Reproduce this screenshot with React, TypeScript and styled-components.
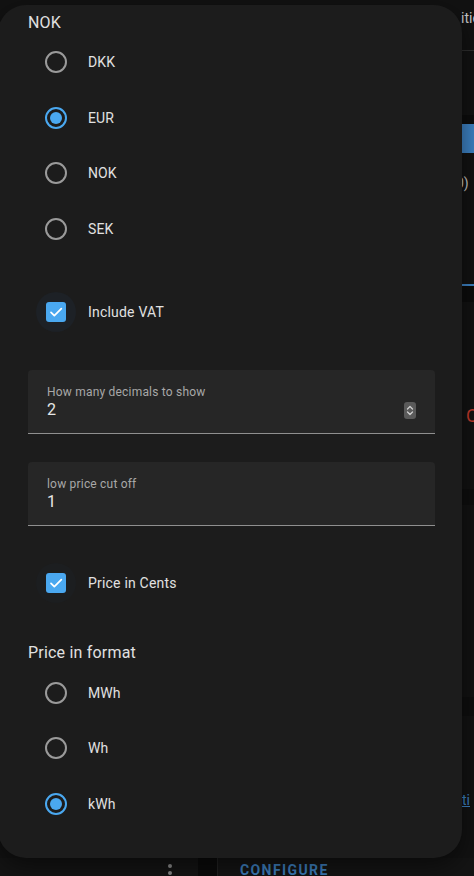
import React from "react"
import styled, { createGlobalStyle } from "styled-components"

const GlobalStyle = createGlobalStyle`
  html, body {
    margin: 0;
    padding: 0;
    background: #111111;
    font-family: Roboto, "Noto Sans", "Liberation Sans", sans-serif;
    overflow: hidden;
  }
`

const Page = styled.div`
  position: relative;
  width: 474px;
  height: 876px;
  display: flex;
  flex-direction: column;
  background: #121212;
  overflow: hidden;
`

const Behind = styled.div`
  flex: 1;
  display: flex;
  justify-content: flex-end;
`

const Strip = styled.div`
  width: 28px;
  display: flex;
  flex-direction: column;
  color: #c8c8c8;
  font-size: 14px;
  overflow: hidden;
`

const StripText = styled.div<{ $top: number; $left?: number; $color?: string; $underline?: boolean; $size?: number }>`
  margin-top: ${(p) => p.$top}px;
  padding-left: ${(p) => p.$left ?? 16}px;
  height: 20px;
  line-height: 20px;
  font-size: ${(p) => p.$size ?? 14}px;
  white-space: nowrap;
  color: ${(p) => p.$color ?? "#c8c8c8"};
  text-decoration: ${(p) => (p.$underline ? "underline" : "none")};
`

const StripBlock = styled.div<{ $top: number; $h: number; $color: string }>`
  margin-top: ${(p) => p.$top}px;
  height: ${(p) => p.$h}px;
  background: ${(p) => p.$color};
  flex-shrink: 0;
`

const Toolbar = styled.div`
  height: 18px;
  display: flex;
  align-items: center;
  background: #141414;
  overflow: hidden;
`

const Dots = styled.div`
  margin-left: 166px;
  width: 8px;
  display: flex;
  flex-direction: column;
  align-items: center;
  gap: 3px;
  padding-top: 4px;

  span {
    width: 4px;
    height: 4px;
    border-radius: 50%;
    background: #8a8a8a;
  }
`

const DarkBox = styled.div`
  margin-left: 24px;
  width: 19px;
  height: 18px;
  background: #0b0b0b;
  border-right: 1px solid #222;
`

const ConfigureLink = styled.div`
  margin-left: 22px;
  padding-top: 5px;
  font-size: 14px;
  font-weight: 700;
  letter-spacing: 1.4px;
  color: #3d7fbe;
`

const Dialog = styled.div`
  position: absolute;
  left: -2px;
  top: 5px;
  width: 464px;
  height: 853px;
  background: #1c1c1c;
  border-radius: 28px;
  box-shadow: 0 8px 24px rgba(0, 0, 0, 0.5);
  overflow: hidden;
  display: flex;
  flex-direction: column;
  padding-left: 30px;
  padding-right: 27px;
  box-sizing: border-box;
  color: #e1e1e1;
`

const SectionTitle = styled.div<{ $top: number }>`
  margin-top: ${(p) => p.$top}px;
  font-size: 16px;
  line-height: 24px;
  color: #e1e1e1;
  letter-spacing: 0.2px;
`

const OptionRow = styled.label`
  height: 55.5px;
  display: flex;
  align-items: center;
  font-size: 14px;
  color: #e1e1e1;
  letter-spacing: 0.1px;
  flex-shrink: 0;
`

const RadioCircle = styled.span<{ $checked: boolean }>`
  margin-left: 17px;
  width: 22px;
  height: 22px;
  box-sizing: border-box;
  border-radius: 50%;
  border: 2px solid ${(p) => (p.$checked ? "#4aa8f0" : "#9a9a9a")};
  display: flex;
  align-items: center;
  justify-content: center;
  margin-right: 21px;

  &::after {
    content: "";
    width: 12px;
    height: 12px;
    border-radius: 50%;
    background: #4aa8f0;
    display: ${(p) => (p.$checked ? "block" : "none")};
  }
`

const CheckRow = styled.label<{ $top: number }>`
  margin-top: ${(p) => p.$top}px;
  height: 56px;
  display: flex;
  align-items: center;
  font-size: 14px;
  color: #e1e1e1;
  letter-spacing: 0.2px;
  flex-shrink: 0;
`

const CheckHalo = styled.span<{ $focused?: boolean }>`
  margin-left: 8px;
  width: 40px;
  height: 40px;
  border-radius: 50%;
  background: ${(p) => (p.$focused ? "#1d2126" : "#1c1e20")};
  display: flex;
  align-items: center;
  justify-content: center;
  margin-right: 12px;
`

const CheckBox = styled.span`
  width: 20px;
  height: 20px;
  border-radius: 3px;
  background: #4aa8f0;
  display: flex;
  align-items: center;
  justify-content: center;
`

const Field = styled.div<{ $top: number }>`
  margin-top: ${(p) => p.$top}px;
  height: 64px;
  flex-shrink: 0;
  box-sizing: border-box;
  background: #262626;
  border-radius: 4px 4px 0 0;
  border-bottom: 1px solid #8f8f8f;
  padding: 14px 19px 0 19px;
  display: flex;
  align-items: flex-start;
`

const FieldText = styled.div`
  flex: 1;
  display: flex;
  flex-direction: column;
`

const FieldLabel = styled.div`
  font-size: 12px;
  line-height: 16px;
  color: #a8a8a8;
  letter-spacing: 0.2px;
`

const FieldValue = styled.div`
  font-size: 16px;
  line-height: 20px;
  color: #e6e6e6;
`

const Spinner = styled.div`
  margin-top: 18px;
  width: 12px;
  height: 17px;
  border-radius: 3px;
  background: #5a5a5a;
  display: flex;
  align-items: center;
  justify-content: center;
`

const Check = () => (
  <svg width="16" height="16" viewBox="0 0 24 24">
    <path d="M4.5 12.5l5 5L20 7" fill="none" stroke="#ffffff" strokeWidth="2.6" strokeLinecap="round" strokeLinejoin="round" />
  </svg>
)

const SpinIcon = () => (
  <svg width="8" height="13" viewBox="0 0 8 13">
    <path d="M1.5 5L4 2.5 6.5 5M1.5 8L4 10.5 6.5 8" fill="none" stroke="#d0d0d0" strokeWidth="1.3" strokeLinecap="round" strokeLinejoin="round" />
  </svg>
)

const Radio = ({ label, checked }: { label: string; checked?: boolean }) => (
  <OptionRow>
    <RadioCircle $checked={!!checked} />
    {label}
  </OptionRow>
)

const currencies = ["DKK", "EUR", "NOK", "SEK"]
const formats = ["MWh", "Wh", "kWh"]

export default function App() {
  return (
    <>
      <GlobalStyle />
      <Page>
        <Behind>
          <Strip>
            <StripText $top={8} $left={15}>itie</StripText>
            <StripBlock $top={22} $h={1} $color="#2e2e2e" />
            <StripBlock $top={64} $h={9} $color="#0c0c0c" />
            <StripBlock $top={0} $h={29} $color="#3d82c4" />
            <StripText $top={20} $left={10}>0)</StripText>
            <StripBlock $top={91} $h={2} $color="#3d82c4" />
            <StripBlock $top={0} $h={16} $color="#0c0c0c" />
            <StripText $top={104} $left={20} $size={18} $color="#c0392b">C</StripText>
            <StripBlock $top={63} $h={16} $color="#0e0e0e" />
            <StripBlock $top={192} $h={19} $color="#0e0e0e" />
            <StripText $top={74} $color="#3d82c4" $underline>
              ti
            </StripText>
          </Strip>
        </Behind>
        <Toolbar>
          <Dots>
            <span />
            <span />
          </Dots>
          <DarkBox />
          <ConfigureLink>CONFIGURE</ConfigureLink>
        </Toolbar>

        <Dialog>
          <SectionTitle $top={5.5}>NOK</SectionTitle>
          {currencies.map((c) => (
            <Radio key={c} label={c} checked={c === "EUR"} />
          ))}

          <CheckRow $top={27}>
            <CheckHalo $focused>
              <CheckBox>
                <Check />
              </CheckBox>
            </CheckHalo>
            Include VAT
          </CheckRow>

          <Field $top={30}>
            <FieldText>
              <FieldLabel>How many decimals to show</FieldLabel>
              <FieldValue>2</FieldValue>
            </FieldText>
            <Spinner>
              <SpinIcon />
            </Spinner>
          </Field>

          <Field $top={28}>
            <FieldText>
              <FieldLabel>low price cut off</FieldLabel>
              <FieldValue>1</FieldValue>
            </FieldText>
          </Field>

          <CheckRow $top={29.5}>
            <CheckHalo>
              <CheckBox>
                <Check />
              </CheckBox>
            </CheckHalo>
            Price in Cents
          </CheckRow>

          <SectionTitle $top={30}>Price in format</SectionTitle>
          {formats.map((f) => (
            <Radio key={f} label={f} checked={f === "kWh"} />
          ))}
        </Dialog>
      </Page>
    </>
  )
}
